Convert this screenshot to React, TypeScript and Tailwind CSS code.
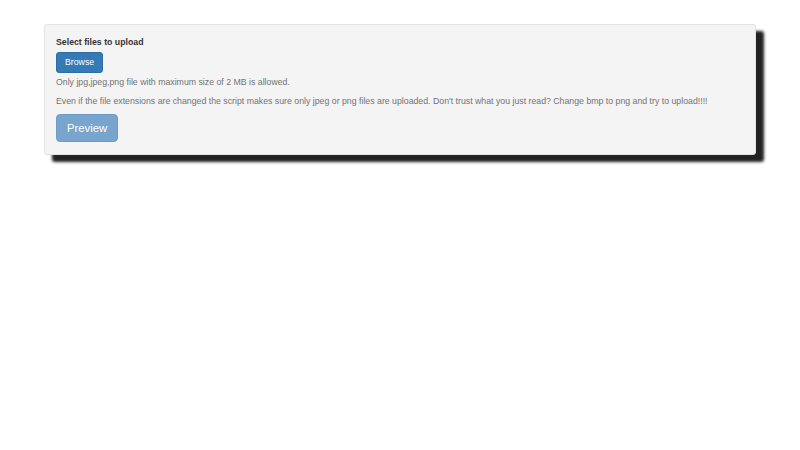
import React from 'react';

function App() {
  return (
    <main className="min-h-screen bg-white px-[44px] pt-[24px] font-['Liberation_Sans',Arial,sans-serif]">
      <div className="w-[712px] rounded-[3px] border border-[#e3e3e3] bg-[#f4f4f4] px-[11px] pt-[11px] pb-[12px] shadow-[8px_7px_3px_#222]">
        <label className="block text-[8.75px] font-bold leading-[12px] text-[#333]">Select files to upload</label>
        <button className="mt-[4px] block h-[21px] rounded-[3px] border border-[#2e6da4] bg-[#337ab7] px-[8px] text-[8.75px] leading-[19px] text-white">
          Browse
        </button>
        <p className="mt-[3px] text-[8.75px] leading-[12px] text-[#737373]">
          Only jpg,jpeg,png file with maximum size of 2 MB is allowed.
        </p>
        <p className="mt-[7px] text-[8.75px] leading-[12px] text-[#737373]">
          Even if the file extensions are changed the script makes sure only jpeg or png files are uploaded. Don't trust what you just read? Change bmp to png and try to upload!!!!
        </p>
        <button className="mt-[7px] block h-[28px] rounded-[4px] border border-[#6d9ccb] bg-[#78a5cd] px-[10px] text-[11.25px] text-white" disabled>
          Preview
        </button>
      </div>
    </main>
  );
}

export default App;
